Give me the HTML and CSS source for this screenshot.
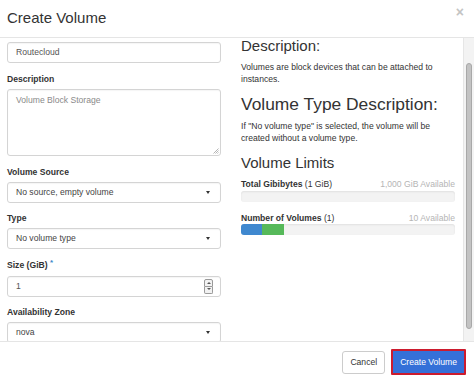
FILE: index.html
```html
<!DOCTYPE html>
<html>
<head>
    <meta charset="utf-8">
    <title>Create Volume</title>
    <link rel="stylesheet" href="styles.css">
</head>
<body>
    <div class="modal">
        <div class="modal-header">
            <h3 class="modal-title">Create Volume</h3>
            <span class="close">&times;</span>
        </div>

        <div class="modal-body">
            <div class="body-content">
                <div class="form-col">
                    <div class="form-group first">
                        <div class="form-control">Routecloud</div>
                    </div>
                    <div class="form-group">
                        <label>Description</label>
                        <div class="form-control textarea placeholder">
                            Volume Block Storage
                            <svg class="grip" width="6" height="6" viewBox="0 0 6 6">
                                <path d="M5.5 0.5 L0.5 5.5 M5.5 2.5 L2.5 5.5 M5.5 4.5 L4.5 5.5" stroke="#b5b5b5" stroke-width="1" fill="none"/>
                            </svg>
                        </div>
                    </div>
                    <div class="form-group">
                        <label>Volume Source</label>
                        <div class="form-control select">No source, empty volume<span class="caret"></span></div>
                    </div>
                    <div class="form-group">
                        <label>Type</label>
                        <div class="form-control select">No volume type<span class="caret"></span></div>
                    </div>
                    <div class="form-group">
                        <label>Size (GiB) <span class="required">*</span></label>
                        <div class="form-control number">1
                            <span class="spinner">
                                <span class="spin up"></span>
                                <span class="spin down"></span>
                            </span>
                        </div>
                    </div>
                    <div class="form-group">
                        <label>Availability Zone</label>
                        <div class="form-control select">nova<span class="caret"></span></div>
                    </div>
                </div>

                <div class="help-col">
                    <h3>Description:</h3>
                    <p>Volumes are block devices that can be attached to instances.</p>
                    <h3 class="wide">Volume Type Description:</h3>
                    <p>If "No volume type" is selected, the volume will be created without a volume type.</p>
                    <h3>Volume Limits</h3>
                    <div class="quota">
                        <div class="quota-label">
                            <span><strong>Total Gibibytes</strong> (1 GiB)</span>
                            <span class="available">1,000 GiB Available</span>
                        </div>
                        <div class="progress"></div>
                    </div>
                    <div class="quota">
                        <div class="quota-label">
                            <span><strong>Number of Volumes</strong> (1)</span>
                            <span class="available">10 Available</span>
                        </div>
                        <div class="progress">
                            <div class="bar bar-used" style="width: 10%"></div>
                            <div class="bar bar-new" style="width: 10%"></div>
                        </div>
                    </div>
                </div>
            </div>

            <div class="scrollbar"><div class="thumb"></div></div>
        </div>

        <div class="modal-footer">
            <button class="btn btn-default">Cancel</button>
            <button class="btn btn-primary">Create Volume</button>
        </div>
    </div>
</body>
</html>
```

FILE: styles.css
```css
body {
    margin: 0;
    font-family: "Liberation Sans", Arial, sans-serif;
    color: #333;
    background: #fff;
}
.modal {
    width: 474px;
    height: 382px;
    display: flex;
    flex-direction: column;
    overflow: hidden;
}
.modal-header {
    height: 37px;
    border-bottom: 1px solid #e5e5e5;
    display: flex;
    justify-content: space-between;
    align-items: flex-start;
    padding: 0 10px 0 7px;
}
.modal-title {
    margin: 0;
    padding-top: 10px;
    font-size: 15px;
    line-height: 15px;
    font-weight: normal;
    color: #333;
}
.close {
    padding-top: 5px;
    font-size: 14px;
    line-height: 14px;
    font-weight: bold;
    color: #c4c4c4;
}
.modal-body {
    height: 303px;
    display: flex;
    overflow: hidden;
}
.body-content {
    flex: 1;
    display: grid;
    grid-template-columns: 214px 214px;
    column-gap: 20px;
    padding: 0 8px 0 7px;
    align-items: start;
}
.form-col {
    padding-top: 4px;
}
.form-group {
    margin-bottom: 9.5px;
}
.form-group.first {
    margin-bottom: 10px;
}
label {
    display: block;
    font-size: 8.6px;
    line-height: 12px;
    font-weight: bold;
    color: #333;
    margin-bottom: 4px;
}
.required {
    color: #3a87c8;
    position: relative;
    top: -3px;
    font-size: 8px;
}
.form-control {
    position: relative;
    box-sizing: border-box;
    height: 21px;
    border: 1px solid #d4d4d4;
    border-radius: 3px;
    padding: 0 8px;
    font-size: 8.6px;
    line-height: 19px;
    color: #555;
    box-shadow: inset 0 1px 1px rgba(0, 0, 0, 0.04);
}
.form-control.textarea {
    height: 67px;
    line-height: 12px;
    padding-top: 4px;
}
.placeholder {
    color: #8a8a8a;
}
.grip {
    position: absolute;
    right: 1px;
    bottom: 1px;
}
.select {
    color: #444;
}
.caret {
    position: absolute;
    right: 10px;
    top: 8px;
    width: 0;
    height: 0;
    border-left: 2.5px solid transparent;
    border-right: 2.5px solid transparent;
    border-top: 3px solid #333;
}
.spinner {
    position: absolute;
    right: 7px;
    top: 2px;
    width: 9px;
    height: 15px;
    display: flex;
    flex-direction: column;
}
.spin {
    flex: 1;
    position: relative;
    border: 1px solid #9a9a9a;
    border-radius: 2px;
    background: #f2f2f2;
}
.spin.up {
    border-bottom-left-radius: 0;
    border-bottom-right-radius: 0;
}
.spin.down {
    border-top: none;
    border-top-left-radius: 0;
    border-top-right-radius: 0;
}
.spin::after {
    content: "";
    position: absolute;
    left: 2px;
    top: 2px;
    border-left: 2px solid transparent;
    border-right: 2px solid transparent;
}
.spin.up::after {
    border-bottom: 2px solid #555;
}
.spin.down::after {
    top: 1.5px;
    border-top: 2px solid #555;
}
.help-col {
    font-size: 8.6px;
    line-height: 12px;
    color: #333;
}
.help-col h3 {
    margin: 0 0 8px;
    font-size: 15px;
    line-height: 15px;
    font-weight: normal;
    color: #333;
    white-space: nowrap;
}
.help-col h3.wide {
    font-size: 17.4px;
}
.help-col p {
    margin: 0 0 11.5px;
}
.quota {
    margin-bottom: 10px;
}
.quota-label {
    display: flex;
    justify-content: space-between;
    line-height: 12px;
    margin-bottom: 0.5px;
}
.quota-label strong {
    color: #333;
}
.available {
    color: #b5b5b5;
}
.progress {
    height: 11px;
    display: flex;
    background: #f3f3f3;
    border-radius: 3px;
    overflow: hidden;
    box-shadow: inset 0 1px 2px rgba(0, 0, 0, 0.08);
}
.bar-used {
    background: #3f88cf;
}
.bar-new {
    background: #56b95a;
}
.scrollbar {
    width: 10px;
    flex: none;
    background: #f3f3f3;
    border-left: 1px solid #e6e6e6;
}
.thumb {
    margin: 25px 2px 0 2px;
    height: 264px;
    background: #c3c3c3;
    border: 1px solid #a8a8a8;
    border-radius: 4px;
}
.modal-footer {
    flex: 1;
    border-top: 1px solid #e5e5e5;
    display: flex;
    justify-content: flex-end;
    align-items: center;
    gap: 6px;
    padding-right: 8px;
}
.btn {
    font-family: "Liberation Sans", Arial, sans-serif;
    font-size: 8.6px;
    border-radius: 3px;
    cursor: pointer;
}
.btn-default {
    height: 23px;
    padding: 0 7px;
    background: #fff;
    color: #333;
    border: 1px solid #ccc;
}
.btn-primary {
    height: 26px;
    padding: 0 7px;
    background: #3570d8;
    color: #fff;
    border: 2px solid #cc1b2e;
    border-radius: 1px;
}
```
